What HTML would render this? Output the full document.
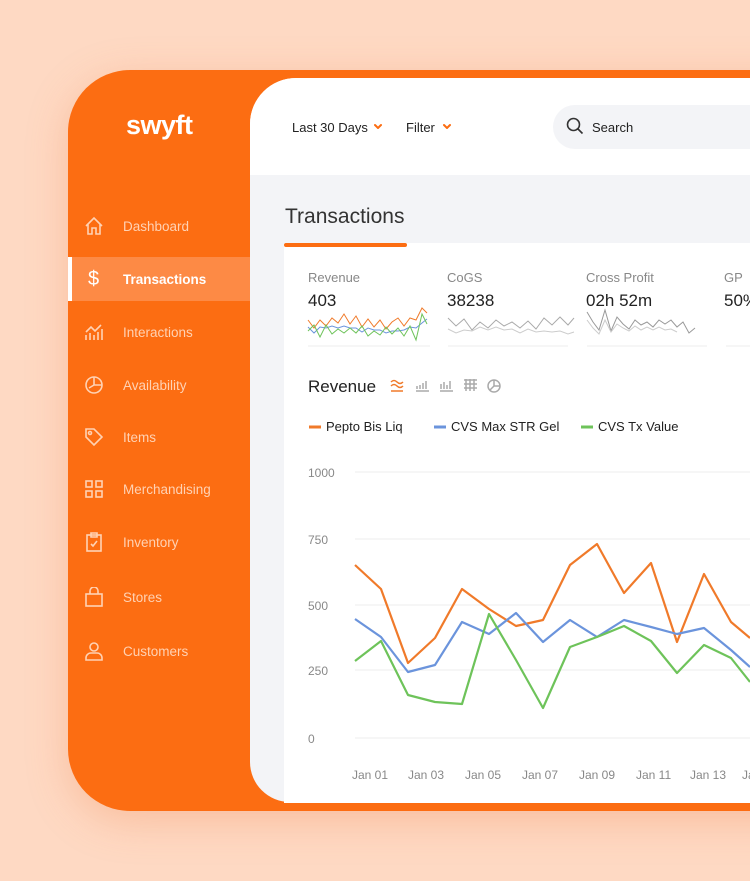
<!DOCTYPE html><html><head><style>
*{margin:0;padding:0;box-sizing:border-box}
body{width:750px;height:881px;background:#fed9c3;font-family:"Liberation Sans",sans-serif;position:relative;overflow:hidden}
.frame{position:absolute;left:68px;top:70px;width:760px;height:741px;background:#fc6d12;border-radius:62px 0 0 62px;box-shadow:0 10px 40px rgba(240,140,90,.35)}
.panel{position:absolute;left:250px;top:78px;width:560px;height:724px;background:#f3f4f7;border-radius:46px 0 0 40px;overflow:hidden}
.hdr{position:absolute;left:0;top:0;width:100%;height:97px;background:#fff}
.logo{position:absolute;left:126px;top:110px;color:#fff;font-weight:bold;font-size:27px;letter-spacing:-0.5px}
.nav{position:absolute;left:68px;width:182px;height:44px;color:#ffd2b4;font-size:13.5px;display:flex;align-items:center}
.nav svg{position:absolute;left:16px}
.nav span{position:absolute;left:55px}
.act{background:#fd8a45;color:#fff;font-weight:bold;border-left:4px solid #fff}
.card{position:absolute;left:284px;top:243px;width:480px;height:560px;background:#fff}
.t{position:absolute;font-size:13px;color:#222}
</style></head><body>
<div class="frame"></div>
<div class="panel"><div class="hdr"></div>
<div style="position:absolute;left:303px;top:27px;width:280px;height:44px;background:#f3f4f7;border-radius:22px"></div>
</div>
<div class="logo">swyft</div>
<div class="t" style="left:292px;top:120px">Last 30 Days</div>
<div class="t" style="left:406px;top:120px">Filter</div>
<svg style="position:absolute;left:0;top:0" width="750" height="200"><g fill="none" stroke="#fc6d12" stroke-width="2" stroke-linecap="round" stroke-linejoin="round"><path d="M375 125l3 3 3-3"/><path d="M444 125l3 3 3-3"/></g></svg>
<svg style="position:absolute;left:566px;top:117px" width="18" height="18" viewBox="0 0 18 18"><circle cx="7.5" cy="7.5" r="6" fill="none" stroke="#333" stroke-width="1.6"/><path d="M12 12l4.5 4.5" stroke="#333" stroke-width="1.6"/></svg>
<div class="t" style="left:592px;top:120px">Search</div>

<div class="nav" style="top:204px"><svg width="20" height="20" viewBox="0 0 20 20" fill="none" stroke="#ffd2b4" stroke-width="1.6"><path d="M2 10L10 2l8 8M4 8v10h4v-6h4v6h4V8"/></svg><span>Dashboard</span></div>
<div class="nav act" style="top:257px"><span style="position:absolute;left:16px;font-size:20px;font-weight:normal">$</span><span style="left:51px">Transactions</span></div>
<div class="nav" style="top:310px"><svg width="20" height="20" viewBox="0 0 20 20" fill="none" stroke="#ffd2b4" stroke-width="1.6"><path d="M2 18v-5M6 18v-7M10 18v-5M14 18v-8M18 18V7M2 10l5-5 4 4 6-6"/></svg><span>Interactions</span></div>
<div class="nav" style="top:363px"><svg width="20" height="20" viewBox="0 0 20 20" fill="none" stroke="#ffd2b4" stroke-width="1.6"><circle cx="10" cy="10" r="8"/><path d="M10 2v8h8M5 13l5-3"/></svg><span>Availability</span></div>
<div class="nav" style="top:415px"><svg width="20" height="20" viewBox="0 0 20 20" fill="none" stroke="#ffd2b4" stroke-width="1.6"><path d="M2 2h8l8 8-8 8-8-8z"/><circle cx="6" cy="6" r="1.5"/></svg><span>Items</span></div>
<div class="nav" style="top:467px"><svg width="20" height="20" viewBox="0 0 20 20" fill="none" stroke="#ffd2b4" stroke-width="1.6"><rect x="2" y="2" width="6" height="6"/><rect x="12" y="2" width="6" height="6"/><rect x="2" y="12" width="6" height="6"/><rect x="12" y="12" width="6" height="6"/></svg><span>Merchandising</span></div>
<div class="nav" style="top:520px"><svg width="20" height="20" viewBox="0 0 20 20" fill="none" stroke="#ffd2b4" stroke-width="1.6"><rect x="3" y="3" width="14" height="16"/><path d="M7 1h6v4H7zM7 12l2 2 4-5"/></svg><span>Inventory</span></div>
<div class="nav" style="top:575px"><svg width="20" height="20" viewBox="0 0 20 20" fill="none" stroke="#ffd2b4" stroke-width="1.6"><rect x="2" y="7" width="16" height="12"/><path d="M6 7V4a4 4 0 018 0v3"/></svg><span>Stores</span></div>
<div class="nav" style="top:629px"><svg width="20" height="20" viewBox="0 0 20 20" fill="none" stroke="#ffd2b4" stroke-width="1.6"><circle cx="10" cy="6" r="4"/><path d="M2 19v-2a5 5 0 015-5h6a5 5 0 015 5v2z"/></svg><span>Customers</span></div>

<div style="position:absolute;left:285px;top:205px;font-size:21px;color:#333">Transactions</div>
<div class="card"></div>
<div style="position:absolute;left:284px;top:243px;width:123px;height:4px;background:#fc6d12;border-radius:2px"></div>

<div class="t" style="left:308px;top:270px;color:#888">Revenue</div><div class="t" style="left:308px;top:291px;font-size:17px">403</div>
<div class="t" style="left:447px;top:270px;color:#888">CoGS</div><div class="t" style="left:447px;top:291px;font-size:17px">38238</div>
<div class="t" style="left:586px;top:270px;color:#888">Cross Profit</div><div class="t" style="left:586px;top:291px;font-size:17px">02h 52m</div>
<div class="t" style="left:724px;top:270px;color:#888">GP</div><div class="t" style="left:724px;top:291px;font-size:17px">50%</div>

<svg style="position:absolute;left:0;top:0" width="750" height="881">
<g fill="none" stroke-width="1">
<path d="M308 320l6 8 6-8 6 6 6-8 6 5 6-9 6 10 6-8 6 11 6-8 6 8 6-7 6 9 6-7 6-4 6 8 6-8 6 2 6-12 5 5" stroke="#f07a2a"/>
<path d="M308 327l6 6 6-6 6 1 6-2 6 2 6-2 6 2 6 0 6 4 6-4 6 2 6 0 6 3 6-2 6 0 6-1 6-3 6 1 6-5 5-4" stroke="#6b94dc"/>
<path d="M308 331l6-6 6 12 6-12 6 9 6-5 6 4 6-5 6 5 6-7 6 10 6-5 6 4 6-8 6 7 6-6 6 8 6-10 6 14 6-26 5 10" stroke="#6ec35a"/>
<path d="M448 318l8 8 8-7 8 11 8-8 8 6 8-8 8 6 8-4 8 6 8-7 8 8 8-11 8 7 8-8 8 8 6-7" stroke="#aaa"/>
<path d="M448 329l8 4 8-3 8 1 8-4 8 3 8-3 8 3 8-1 8 4 8-4 8 3 8-1 8 1 8-1 8 3 6-2" stroke="#ccc"/>
<path d="M587 312l6 10 6 8 6-20 6 21 6-14 6 7 6 5 6-9 6 5 6-3 6 5 6-7 6 4 6-4 6 7 6-5 6 11 6-5" stroke="#999"/>
<path d="M587 320l6 8 6 6 6-14 6 12 6-8 6 4 6 3 6-5 6 4 6-3 6 3 6-3 6 3 6-1 6 3" stroke="#ccc"/>
<path d="M308 346h122M448 346h120M587 346h120M726 346h30" stroke="#eee"/>
<path d="M355 472h400M355 539h400M355 605h400M355 670h400M355 738h400" stroke="#eee"/>
</g>
<g fill="none" stroke-width="2.2" stroke-linejoin="round">
<polyline stroke="#f07a2a" points="355,565 381,589 408,663 435,638 462,589 489,609 516,626 543,620 570,565 597,544 624,593 651,563 677,642 704,574 731,622 750,638"/>
<polyline stroke="#6b94dc" points="355,619 381,637 408,672 435,665 462,622 489,634 516,613 543,642 570,620 597,637 624,620 651,627 677,634 704,628 731,650 750,667"/>
<polyline stroke="#6ec35a" points="355,661 381,641 408,695 435,702 462,704 489,614 516,660 543,708 570,647 597,637 624,626 651,641 677,673 704,645 731,658 750,682"/>
</g>
<g fill="#888" font-size="12" font-family="Liberation Sans">
<text x="308" y="477">1000</text><text x="308" y="544">750</text><text x="308" y="610">500</text><text x="308" y="675">250</text><text x="308" y="743">0</text>
<text x="352" y="779">Jan 01</text><text x="408" y="779">Jan 03</text><text x="465" y="779">Jan 05</text><text x="522" y="779">Jan 07</text><text x="579" y="779">Jan 09</text><text x="636" y="779">Jan 11</text><text x="690" y="779">Jan 13</text><text x="742" y="779">Ja</text>
</g>
<g stroke-width="3"><path d="M309 427h12" stroke="#f07a2a"/><path d="M434 427h12" stroke="#6b94dc"/><path d="M581 427h12" stroke="#6ec35a"/></g>
<g fill="none" stroke-width="1.5"><path d="M391 382q3-3 6 0t6 0M391 386q3-3 6 0t6 0M391 391h12" stroke="#f07a2a"/>
<path d="M416 391h13M417 389v-3M420 389v-4M423 389v-6M426 389v-8" stroke="#aaa"/>
<path d="M440 391h13M441 389v-5M444 389v-7M447 389v-4M450 389v-8" stroke="#aaa"/>
<path d="M464 380h13M464 384h13M464 388h13M466 379v12M470 379v12M474 379v12" stroke="#aaa"/>
<circle cx="494" cy="386" r="6" stroke="#aaa"/><path d="M494 380v6h6M490 390l4-4" stroke="#aaa"/></g>
</svg>
<div class="t" style="left:308px;top:377px;font-size:17px">Revenue</div>
<div class="t" style="left:326px;top:419px">Pepto Bis Liq</div>
<div class="t" style="left:451px;top:419px">CVS Max STR Gel</div>
<div class="t" style="left:598px;top:419px">CVS Tx Value</div>
</body></html>
